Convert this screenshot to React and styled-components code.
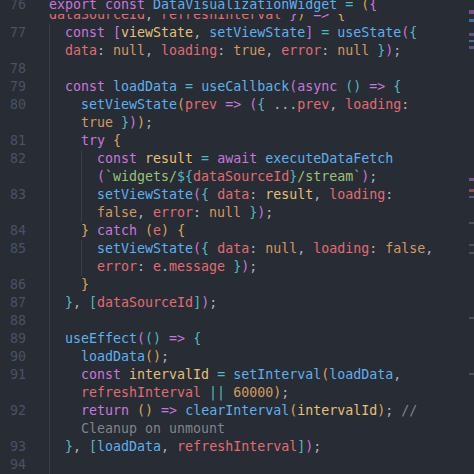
import React from 'react';
import styled, { createGlobalStyle } from 'styled-components';

const GlobalStyle = createGlobalStyle`
  html, body {
    margin: 0;
    padding: 0;
    background: #282c34;
  }
`;

const colors = {
  k: '#c678dd',
  f: '#61afef',
  p: '#e06c75',
  n: '#d19a66',
  v: '#e5c07b',
  s: '#98c379',
  o: '#56b6c2',
  t: '#abb2bf',
  c: '#7f848e',
  b1: '#d7a65f',
  b2: '#c678dd',
  b3: '#56b6c2',
};

const Window = styled.div`
  width: 474px;
  height: 474px;
  overflow: hidden;
  display: flex;
  background: #282c34;
  font-family: "DejaVu Sans Mono", "Liberation Mono", monospace;
  font-size: 13.3px;
`;

const EditorArea = styled.div`
  position: relative;
  flex: 1;
  overflow: hidden;
`;

const Lines = styled.div`
  margin-top: -12px;
`;

const StickyHeader = styled.div`
  position: absolute;
  top: -4px;
  left: 0;
  right: 0;
  background: #282c34;
  z-index: 2;
`;

const Row = styled.div`
  display: flex;
  height: 18px;
  line-height: 18px;
  white-space: pre;
`;

const LineNo = styled.div`
  width: 26px;
  text-align: right;
  color: #4b5263;
  flex-shrink: 0;
`;

const GutterGap = styled.div`
  width: 23px;
  flex-shrink: 0;
`;

const Code = styled.div`
  display: flex;
  flex: 1;
`;

const Level = styled.span`
  display: inline-block;
  width: 16px;
  height: 18px;
  box-sizing: border-box;
  border-left: 1px solid ${(p) => (p.$guide ? '#3b4048' : 'transparent')};
`;

const Tok = styled.span`
  color: ${(p) => colors[p.$c]};
`;

const Minimap = styled.div`
  width: 8px;
  flex-shrink: 0;
  background: #282c34;
`;

// tokens written as "key:text|key:text"; a "|" only splits before a key
const T = (s) => s.split(/\|(?=[a-z0-9]+:)/).map((part) => {
  const i = part.indexOf(':');
  return [part.slice(0, i), part.slice(i + 1)];
});

// rows: [lineNumber or '', indent (chars), guides (columns), tokens]
const rows = [
  ['', 0, [], T('p:dataSourceId|t:, |p:refreshInterval|t: |b2:}|b1:)|t: |k:=>|t: |b1:{')],
  ['77', 2, [0], T('k:const|t: |b2:[|v:viewState|t:, |f:setViewState|b2:]|t: |o:=|t: |f:useState|b2:(|b3:{')],
  ['', 2, [0], T('p:data|t:: |n:null|t:, |p:loading|t:: |n:true|t:, |p:error|t:: |n:null|t: |b3:}|b2:)|t:;')],
  ['78', 0, [0], []],
  ['79', 2, [0], T('k:const|t: |f:loadData|t: |o:=|t: |f:useCallback|b2:(|k:async|t: |b3:()|t: |k:=>|t: |b3:{')],
  ['80', 4, [0], T('f:setViewState|b1:(|p:prev|t: |k:=>|t: |b2:(|b3:{|t: ...|p:prev|t:, |p:loading|t::')],
  ['', 4, [0], T('n:true|t: |b3:}|b2:)|b1:)|t:;')],
  ['81', 4, [0], T('k:try|t: |b1:{')],
  ['82', 6, [0, 4], T('k:const|t: |v:result|t: |o:=|t: |k:await|t: |f:executeDataFetch')],
  ['', 6, [0, 4], T('b2:(|s:`widgets/|o:${|p:dataSourceId|o:}|s:/stream`|b2:)|t:;')],
  ['83', 6, [0, 4], T('f:setViewState|b2:(|b3:{|t: |p:data|t:: |v:result|t:, |p:loading|t::')],
  ['', 6, [0, 4], T('n:false|t:, |p:error|t:: |n:null|t: |b3:}|b2:)|t:;')],
  ['84', 4, [0], T('b1:}|t: |k:catch|t: |b1:(|p:e|b1:)|t: |b1:{')],
  ['85', 6, [0, 4], T('f:setViewState|b2:(|b3:{|t: |p:data|t:: |n:null|t:, |p:loading|t:: |n:false|t:,')],
  ['', 6, [0, 4], T('p:error|t:: |p:e|t:.|p:message|t: |b3:}|b2:)|t:;')],
  ['86', 4, [0], T('b1:}')],
  ['87', 2, [0], T('b3:}|t:, |b3:[|p:dataSourceId|b3:]|b2:)|t:;')],
  ['88', 0, [0], []],
  ['89', 2, [0], T('f:useEffect|b2:(|b3:()|t: |k:=>|t: |b3:{')],
  ['90', 4, [0], T('f:loadData|b1:()|t:;')],
  ['91', 4, [0], T('k:const|t: |v:intervalId|t: |o:=|t: |f:setInterval|b1:(|f:loadData|t:,')],
  ['', 4, [0], T('p:refreshInterval|t: |o:|||t: |n:60000|b1:)|t:;')],
  ['92', 4, [0], T('k:return|t: |b1:()|t: |k:=>|t: |f:clearInterval|b1:(|v:intervalId|b1:)|t:; |c://')],
  ['', 4, [0], T('c:Cleanup on unmount')],
  ['93', 2, [0], T('b3:}|t:, |b3:[|f:loadData|t:, |p:refreshInterval|b3:]|b2:)|t:;')],
  ['94', 0, [0], []],
];

const header = ['76', 0, [], T('k:export|t: |k:const|t: |f:DataVisualizationWidget|t: |o:=|t: |b1:(|b2:{')];

const CodeRow = ({ row }) => {
  const [num, indent, guides, tokens] = row;
  const levels = Math.max(indent / 2, guides.length ? Math.max(...guides) / 2 + 1 : 0);
  const cells = [];
  for (let i = 0; i < levels; i++) {
    cells.push(<Level key={i} $guide={guides.includes(i * 2)} />);
  }
  return (
    <Row>
      <LineNo>{num}</LineNo>
      <GutterGap />
      <Code>
        {cells}
        <span>
          {tokens.map(([c, text], i) => (
            <Tok key={i} $c={c}>{text}</Tok>
          ))}
        </span>
      </Code>
    </Row>
  );
};

const marks = [
  [10, 4, '#c678dd'], [19, 3, '#61afef'], [33, 3, '#8a7fd0'], [40, 2, '#61afef'],
  [46, 3, '#8a7fd0'], [178, 3, '#c678dd'], [189, 3, '#e06c75'], [196, 2, '#8a7fd0'],
  [222, 2, '#6b7280'], [244, 2, '#6b7280'], [252, 2, '#6b7280'], [317, 2, '#6b7280'],
  [373, 2, '#6b7280'],
];

const App = () => (
  <>
    <GlobalStyle />
    <Window>
      <EditorArea>
        <StickyHeader>
          <CodeRow row={header} />
        </StickyHeader>
        <Lines>
          <Row />
          {rows.map((r, i) => (
            <CodeRow key={i} row={r} />
          ))}
        </Lines>
      </EditorArea>
      <Minimap>
        <svg width="8" height="474" viewBox="0 0 8 474">
          {marks.map(([y, h, c], i) => (
            <rect key={i} x="3" y={y} width="5" height={h} fill={c} opacity="0.5" />
          ))}
        </svg>
      </Minimap>
    </Window>
  </>
);

export default App;
